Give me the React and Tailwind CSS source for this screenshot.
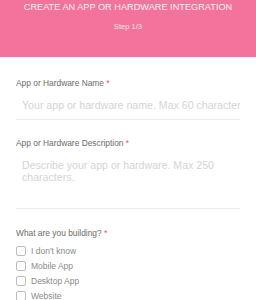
export default function App() {
  const options = ["I don't know", 'Mobile App', 'Desktop App', 'Website']
  return (
    <div className="w-[256px] h-[300px] overflow-hidden bg-white" style={{ fontFamily: '"Liberation Sans", Arial, sans-serif' }}>
      <div className="h-[57px] bg-[#f4739d] flex flex-col items-center pt-[3px]">
        <div className="text-[9.2px] leading-[9px] mt-[0px] text-[#fff0f5] uppercase">Create an app or hardware integration</div>
        <div className="text-[7.5px] mt-[9px] text-[#fde0ea]">Step 1/3</div>
      </div>
      <div className="px-4">
        <div className="mt-[20px] text-[8.4px] text-[#6b6b6b]">
          App or Hardware Name <span className="text-[#f0476f]">*</span>
        </div>
        <div className="mt-[8px] border-b border-[#ebebeb] pl-[6px] pb-[5px] whitespace-nowrap overflow-hidden text-[10.6px] text-[#d4d4d4]">
          Your app or hardware name. Max 60 characters
        </div>
        <div className="mt-[17px] text-[8.4px] text-[#6b6b6b]">
          App or Hardware Description <span className="text-[#f0476f]">*</span>
        </div>
        <div className="mt-[10px] h-[50px] border-b border-[#ebebeb] pl-[6px] pr-[20px] text-[10.6px] leading-[12px] text-[#d4d4d4]">
          Describe your app or hardware. Max 250 characters.
        </div>
        <div className="mt-[18px] text-[8.4px] text-[#6b6b6b]">
          What are you building? <span className="text-[#f0476f]">*</span>
        </div>
        <div className="mt-[6px] flex flex-col gap-[4px]">
          {options.map(o => (
            <div key={o} className="flex items-center gap-[5px] h-[11px]">
              <span className="w-[10px] h-[10px] rounded-[2px] border border-[#bdbdbd]" />
              <span className="text-[8.5px] text-[#8a8a8a]">{o}</span>
            </div>
          ))}
        </div>
      </div>
    </div>
  )
}
